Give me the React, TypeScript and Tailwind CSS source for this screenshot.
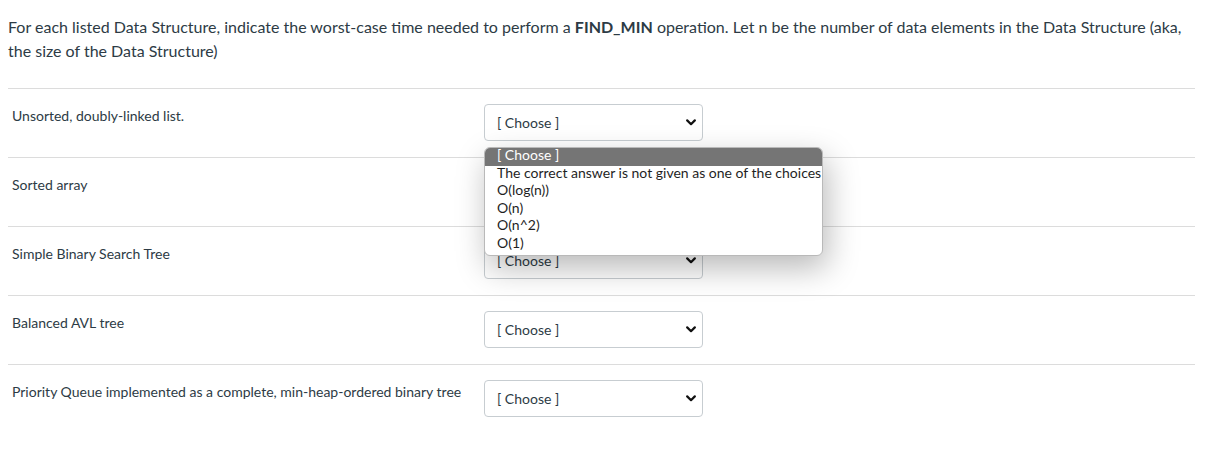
import { ReactNode } from "react";

const ROWS = [
  "Unsorted, doubly-linked list.",
  "Sorted array",
  "Simple Binary Search Tree",
  "Balanced AVL tree",
  "Priority Queue implemented as a complete, min-heap-ordered binary tree",
];

const OPTIONS = [
  "[ Choose ]",
  "The correct answer is not given as one of the choices",
  "O(log(n))",
  "O(n)",
  "O(n^2)",
  "O(1)",
];

function Chevron() {
  return (
    <svg width="10" height="7" viewBox="0 0 10 7" aria-hidden="true">
      <path d="M1.2 1.4 L5 5.2 L8.8 1.4" fill="none" stroke="#111" strokeWidth="2.2" strokeLinecap="round" strokeLinejoin="round" />
    </svg>
  );
}

function FakeSelect({ children }: { children?: ReactNode }) {
  return (
    <div className="relative mt-[15px] h-[37px] w-[219px]">
      <div className="flex h-full w-full items-center justify-between rounded-[4px] border border-[#c7cdd1] bg-white pl-[12px] pr-[6px] text-[14px] text-[#2d3b45]">
        <span>[ Choose ]</span>
        <Chevron />
      </div>
      {children}
    </div>
  );
}

/** The native option list as it shows while the first select is open. */
function OpenList() {
  return (
    <div className="absolute left-0 top-[43px] z-10 w-[339px] overflow-hidden rounded-[6px] border border-[#b9b9b9] bg-white pb-[1px] text-[14px] text-[#1f1f1f] shadow-[4px_12px_32px_rgba(0,0,0,0.28)]">
      {OPTIONS.map((o, i) => (
        <div
          key={o}
          className={`h-[17.6px] whitespace-nowrap pl-[12px] leading-[14px] ${i === 0 ? "bg-[#757575] text-white" : ""}`}
        >
          {o}
        </div>
      ))}
    </div>
  );
}

export default function App() {
  return (
    <div className="min-h-[449px] bg-white px-[8px] text-[#2d3b45]" style={{ fontFamily: "Lato, 'Noto Sans', sans-serif" }}>
      <div className="w-[1187px] border-b border-[#dcdcdc] pb-[25px] pt-[15px] text-[16px] leading-[24px]">
        For each listed Data Structure, indicate the worst-case time needed to perform a <b>FIND_MIN</b> operation. Let n be the
        number of data elements in the Data Structure (aka, the size of the Data Structure)
      </div>
      <div className="w-[1187px]">
        {ROWS.map((label, i) => (
          <div
            key={label}
            className={`flex h-[69px] items-start px-[4px] ${i < ROWS.length - 1 ? "border-b border-[#dcdcdc]" : ""}`}
          >
            <div className="mt-[17px] w-[472px] text-[14px] leading-[20px]">{label}</div>
            <FakeSelect>{i === 0 && <OpenList />}</FakeSelect>
          </div>
        ))}
      </div>
    </div>
  );
}
